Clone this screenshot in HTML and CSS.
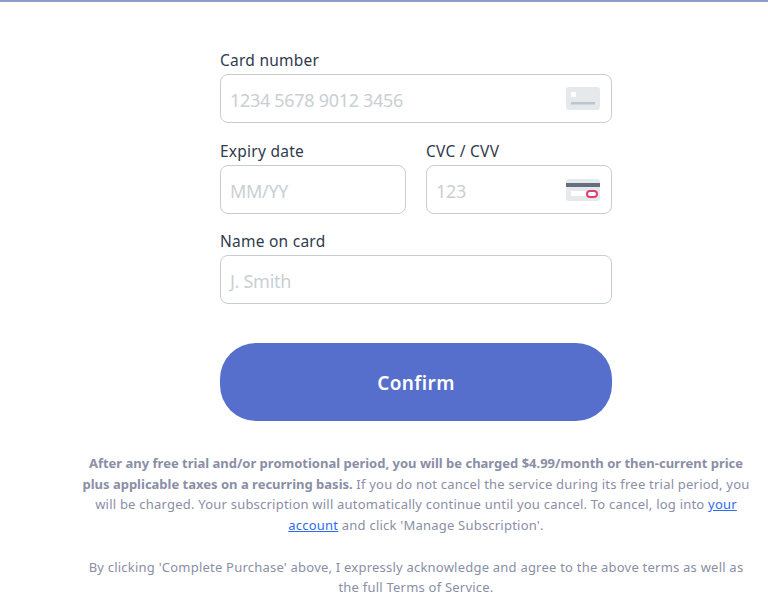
FILE: index.html
```html
<!DOCTYPE html>
<html lang="en">
<head>
    <meta charset="UTF-8">
    <meta name="viewport" content="width=device-width, initial-scale=1.0">
    <title>Payment details</title>
    <link rel="stylesheet" href="styles.css">
</head>

<body>
    <div class="top-line"></div>

    <form class="card-form">
        <div class="field">
            <label class="field-label">Card number</label>
            <div class="field-box">
                <span class="placeholder">1234 5678 9012 3456</span>
                <svg class="field-icon" width="34" height="23" viewBox="0 0 34 23">
                    <rect width="34" height="23" rx="3" fill="#e6e9ec"/>
                    <rect x="5" y="5" width="5" height="5" fill="#fff"/>
                    <rect x="5" y="15" width="24" height="2.5" fill="#bcc5cb"/>
                </svg>
            </div>
        </div>

        <div class="field-row">
            <div class="field">
                <label class="field-label">Expiry date</label>
                <div class="field-box">
                    <span class="placeholder">MM/YY</span>
                </div>
            </div>
            <div class="field">
                <label class="field-label">CVC / CVV</label>
                <div class="field-box">
                    <span class="placeholder">123</span>
                    <svg class="field-icon" width="34" height="22" viewBox="0 0 34 22">
                        <rect width="34" height="22" rx="3" fill="#e6e9ec"/>
                        <rect y="4" width="34" height="4" fill="#666e80"/>
                        <rect x="5" y="12" width="22" height="5" fill="#fff"/>
                        <rect x="21" y="12" width="10" height="6" rx="3" fill="#fff" stroke="#e0406f" stroke-width="2"/>
                    </svg>
                </div>
            </div>
        </div>

        <div class="field">
            <label class="field-label">Name on card</label>
            <div class="field-box">
                <span class="placeholder">J. Smith</span>
            </div>
        </div>

        <button type="submit" class="confirm-button">Confirm</button>
    </form>

    <div class="terms">
        <p><b>After any free trial and/or promotional period, you will be charged $4.99/month or then-current price plus applicable taxes on a recurring basis.</b> If you do not cancel the service during its free trial period, you will be charged. Your subscription will automatically continue until you cancel. To cancel, log into <a href="#">your account</a> and click 'Manage Subscription'.</p>
        <p>By clicking 'Complete Purchase' above, I expressly acknowledge and agree to the above terms as well as the full Terms of Service.</p>
    </div>
</body>
</html>
```

FILE: styles.css
```css
html, body {
    margin: 0;
    height: 599px;
    overflow: hidden;
}

body {
    background-color: #fff;
    font-family: "Noto Sans", "Open Sans", sans-serif;
}

.top-line {
    height: 2px;
    background-color: #8e9dc9;
}

/* form */
.card-form {
    width: 392px;
    margin-left: 220px;
    padding-top: 47px;
}

.field {
    flex: 1;
    margin-bottom: 17px;
}

.field-row {
    display: flex;
    gap: 20px;
    margin-bottom: -1px;
}

.field-label {
    display: block;
    height: 25px;
    font-size: 15.5px;
    line-height: 22px;
    letter-spacing: 0.25px;
    color: #2f3a4d;
}

.field-box {
    display: flex;
    align-items: center;
    justify-content: space-between;
    box-sizing: border-box;
    height: 49px;
    padding: 0 11px 0 9px;
    border: 1px solid #c5ced3;
    border-radius: 8px;
}

.placeholder {
    padding-top: 2px;
    font-size: 18px;
    letter-spacing: -0.3px;
    color: #c9cfd4;
}

.confirm-button {
    display: block;
    width: 100%;
    height: 78px;
    margin-top: 39px;
    padding-top: 3px;
    background-color: #566fcc;
    color: #fff;
    border: none;
    border-radius: 36px;
    font-family: inherit;
    font-size: 19px;
    font-weight: 600;
    letter-spacing: 0.4px;
}

/* terms */
.terms {
    width: 668px;
    margin: 32px 0 0 82px;
    font-size: 13px;
    line-height: 20.7px;
    letter-spacing: 0.22px;
    text-align: center;
    color: #8a8ea6;
}

.terms b {
    letter-spacing: 0;
}

.terms p {
    margin: 0 0 20.7px;
}

.terms a {
    color: #2f6bf0;
}
```
